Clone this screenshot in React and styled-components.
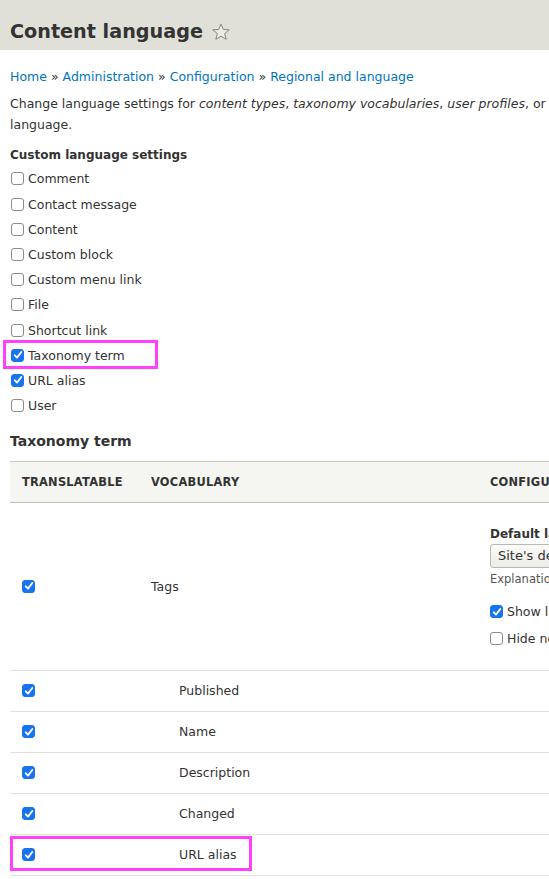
import React from "react";
import styled, { createGlobalStyle } from "styled-components";

const Global = createGlobalStyle`
  html, body { margin: 0; padding: 0; overflow: hidden; background: #fff; }
  body { font-family: "DejaVu Sans", "Noto Sans", sans-serif; color: #333; font-size: 12.5px; }
  *, *::before, *::after { box-sizing: border-box; }
`;

const Page = styled.div`
  width: 820px;
`;

const HeaderBand = styled.header`
  height: 50px;
  background: #e0e0d8;
  padding: 16px 10px 0;
  display: flex;
  align-items: flex-start;
`;

const Title = styled.h1`
  margin: 0;
  font-size: 19.2px;
  line-height: 32px;
  font-weight: bold;
  color: #333;
  display: flex;
  align-items: center;
  gap: 8px;
`;

const Main = styled.main`
  padding: 17px 10px 0;
`;

const Breadcrumb = styled.nav`
  line-height: 20px;
  white-space: nowrap;
  color: #333;
`;

const Crumb = styled.a`
  color: #0074bd;
  text-decoration: none;
`;

const Sep = styled.span`
  margin: 0 4px;
`;

const Description = styled.p`
  margin: 5.5px 0 0;
  line-height: 21px;
`;

const Line = styled.span`
  display: block;
  white-space: nowrap;
`;

const SectionLabel = styled.div`
  margin-top: 10.5px;
  font-weight: bold;
  font-size: 12px;
  line-height: 20px;
`;

const CheckList = styled.div`
  margin-top: 1.4px;
  display: flex;
  flex-direction: column;
`;

const Item = styled.label`
  position: relative;
  display: flex;
  align-items: center;
  gap: 4px;
  height: ${(p) => p.$h || 25.2}px;
  padding-left: ${(p) => p.$pad ?? 1}px;
  white-space: nowrap;
  ${(p) =>
    p.$mark &&
    `
    &::after {
      content: "";
      position: absolute;
      left: -7px;
      top: -3px;
      width: 155px;
      height: 29px;
      border: 3px solid #ff40ff;
      pointer-events: none;
    }
  `}
`;

const Box = styled.span`
  flex: none;
  width: 13px;
  height: 13px;
  border-radius: 3px;
  display: inline-flex;
  align-items: center;
  justify-content: center;
  border: 1px solid ${(p) => (p.$on ? "#1774f0" : "#8c8c8c")};
  background: ${(p) => (p.$on ? "#1774f0" : "#fff")};
`;

const Check = ({ on }) => (
  <Box $on={on}>
    {on && (
      <svg width="10" height="10" viewBox="0 0 10 10">
        <path d="M1.8 5.3 L4 7.6 L8.3 2" fill="none" stroke="#fff" strokeWidth="1.9" strokeLinecap="round" strokeLinejoin="round" />
      </svg>
    )}
  </Box>
);

const SubHeading = styled.h2`
  margin: 12.4px 0 0;
  font-size: 14px;
  line-height: 20px;
  font-weight: bold;
`;

const Table = styled.table`
  margin-top: 10px;
  width: 800px;
  border-collapse: collapse;
  table-layout: fixed;
`;

const HeadRow = styled.tr`
  background: #f5f5f2;
  border-top: 1px solid #c8c7c0;
  border-bottom: 1px solid #bfbeb8;
`;

const Th = styled.th`
  height: 41px;
  padding: 0 12px;
  text-align: left;
  font-size: 11.4px;
  letter-spacing: 0.25px;
  font-weight: bold;
  text-transform: uppercase;
  color: #333;
  white-space: nowrap;
`;

const Row = styled.tr`
  border-bottom: 1px solid #e2e1dc;
`;

const Td = styled.td`
  height: 41px;
  padding: 0 12px;
  vertical-align: middle;
  white-space: nowrap;
  position: relative;
  ${(p) => p.$indent && `padding-left: 40px;`}
  ${(p) =>
    p.$mark &&
    `
    &::after {
      content: "";
      position: absolute;
      left: 0;
      top: 1px;
      width: 242px;
      height: 35px;
      border: 3px solid #ff40ff;
      pointer-events: none;
    }
  `}
`;

const ConfigTd = styled.td`
  padding: 22px 12px 17.5px;
  vertical-align: top;
  white-space: nowrap;
`;

const FieldLabel = styled.div`
  font-weight: bold;
  font-size: 12px;
  line-height: 20px;
  margin-top: -1px;
`;

const Select = styled.div`
  height: 24px;
  width: 260px;
  border: 1px solid #b9b8b2;
  border-radius: 3px;
  background: linear-gradient(#fbfbf9, #ecebe6);
  font-size: 13px;
  line-height: 22px;
  padding: 0 7px;
  color: #333;
`;

const Help = styled.div`
  margin-top: 3px;
  font-size: 11.5px;
  line-height: 16px;
  color: #555;
`;

const OptionList = styled.div`
  margin-top: 11.5px;
`;

const subs = ["Published", "Name", "Description", "Changed", "URL alias"];

const customItems = [
  ["Comment", false],
  ["Contact message", false],
  ["Content", false],
  ["Custom block", false],
  ["Custom menu link", false],
  ["File", false],
  ["Shortcut link", false],
  ["Taxonomy term", true, true],
  ["URL alias", true],
  ["User", false],
];

function Star() {
  return (
    <svg width="20" height="20" viewBox="0 0 24 24">
      <path
        d="M12 2.5 L14.8 9 L21.8 9.4 L16.4 13.9 L18.2 20.8 L12 17 L5.8 20.8 L7.6 13.9 L2.2 9.4 L9.2 9 Z"
        fill="#fff"
        fillOpacity="0.4"
        stroke="#7f7d6e"
        strokeWidth="1.1"
        strokeLinejoin="round"
      />
    </svg>
  );
}

export default function App() {
  return (
    <Page>
      <Global />
      <HeaderBand>
        <Title>
          Content language <Star />
        </Title>
      </HeaderBand>
      <Main>
        <Breadcrumb>
          <Crumb href="#">Home</Crumb>
          <Sep>»</Sep>
          <Crumb href="#">Administration</Crumb>
          <Sep>»</Sep>
          <Crumb href="#">Configuration</Crumb>
          <Sep>»</Sep>
          <Crumb href="#">Regional and language</Crumb>
        </Breadcrumb>
        <Description>
          <Line>
            Change language settings for <em>content types</em>, <em>taxonomy vocabularies</em>,{" "}
            <em>user profiles</em>, or any other supported element on your site. By default,
          </Line>
          <Line>language.</Line>
        </Description>
        <SectionLabel>Custom language settings</SectionLabel>
        <CheckList>
          {customItems.map(([label, on, mark]) => (
            <Item key={label} $mark={mark}>
              <Check on={on} />
              {label}
            </Item>
          ))}
        </CheckList>
        <SubHeading>Taxonomy term</SubHeading>
        <Table>
          <colgroup>
            <col style={{ width: 129 }} />
            <col style={{ width: 339 }} />
            <col />
          </colgroup>
          <thead>
            <HeadRow>
              <Th>Translatable</Th>
              <Th>Vocabulary</Th>
              <Th>Configuration</Th>
            </HeadRow>
          </thead>
          <tbody>
            <Row>
              <Td>
                <Item $pad={0} $h={20}>
                  <Check on />
                </Item>
              </Td>
              <Td>Tags</Td>
              <ConfigTd>
                <FieldLabel>Default language</FieldLabel>
                <Select>Site's default language (English)</Select>
                <Help>Explanation of the language options is on the Languages list page.</Help>
                <OptionList>
                  <Item $pad={0} $h={27}>
                    <Check on />
                    Show language selector on create and edit pages
                  </Item>
                  <Item $pad={0} $h={27}>
                    <Check on={false} />
                    Hide non translatable fields on translation forms
                  </Item>
                </OptionList>
              </ConfigTd>
            </Row>
            {subs.map((s, i) => (
              <Row key={s}>
                <Td $mark={i === subs.length - 1}>
                  <Item $pad={0} $h={20}>
                    <Check on />
                  </Item>
                </Td>
                <Td $indent>{s}</Td>
                <Td />
              </Row>
            ))}
          </tbody>
        </Table>
      </Main>
    </Page>
  );
}
